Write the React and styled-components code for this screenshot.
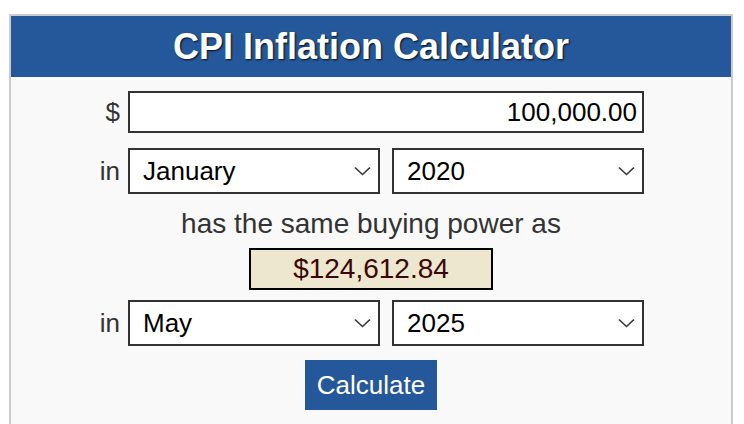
import React from "react";
import styled, { createGlobalStyle } from "styled-components";

const Global = createGlobalStyle`
  html, body { margin: 0; padding: 0; background: #ffffff; }
  body { font-family: "Liberation Sans", Arial, Helvetica, sans-serif; }
  * { box-sizing: border-box; }
`;

const Panel = styled.div`
  margin: 14px 0 0 9px;
  width: 724px;
  height: 430px;
  border: 2px solid #cccccc;
  border-bottom: none;
  background: #f9f9f9;
`;

const Header = styled.div`
  height: 61px;
  background: #25589a;
  display: flex;
  align-items: center;
  justify-content: center;
`;

const Title = styled.h1`
  margin: 0;
  color: #ffffff;
  font-size: 36px;
  font-weight: 700;
  text-shadow: 1px 1px 2px rgba(0, 0, 0, 0.85);
`;

const Form = styled.div`
  display: flex;
  flex-direction: column;
  align-items: center;
`;

const Row = styled.div`
  display: grid;
  grid-template-columns: 22px 516px;
  column-gap: 8px;
  align-items: center;
  margin-top: ${(p) => p.$top}px;
`;

const Label = styled.span`
  text-align: right;
  font-size: 26px;
  color: #333333;
`;

const AmountInput = styled.input`
  height: 42px;
  width: 516px;
  border: 2px solid #333333;
  background: #ffffff;
  font-family: inherit;
  font-size: 26px;
  color: #000000;
  text-align: right;
  padding: 0 5px;
  outline: none;
`;

const Selects = styled.div`
  display: grid;
  grid-template-columns: 252px 252px;
  column-gap: 12px;
`;

const SelectWrap = styled.div`
  position: relative;
  height: 46px;
`;

const Select = styled.select`
  appearance: none;
  -webkit-appearance: none;
  width: 100%;
  height: 100%;
  border: 2px solid #333333;
  border-radius: 0;
  background: #ffffff;
  font-family: inherit;
  font-size: 26px;
  color: #000000;
  padding: 0 36px 0 13px;
  outline: none;
`;

const Chevron = styled.svg`
  position: absolute;
  right: 9px;
  top: 18px;
  width: 17px;
  height: 10px;
  pointer-events: none;
`;

const Caption = styled.div`
  margin-top: 14px;
  font-size: 28px;
  line-height: 32px;
  color: #333333;
`;

const Result = styled.div`
  margin-top: 8px;
  width: 244px;
  height: 42px;
  border: 2px solid #000000;
  background: #ede7d0;
  color: #3a0808;
  font-size: 28px;
  display: flex;
  align-items: center;
  justify-content: center;
`;

const Button = styled.button`
  margin-top: 14px;
  height: 50px;
  width: 132px;
  border: none;
  background: #25589a;
  color: #ffffff;
  font-family: inherit;
  font-size: 26px;
  padding: 0;
`;

const months = [
  "January", "February", "March", "April", "May", "June",
  "July", "August", "September", "October", "November", "December",
];
const years = Array.from({ length: 113 }, (_, i) => String(1913 + i));

function Dropdown({ value, options }) {
  return (
    <SelectWrap>
      <Select defaultValue={value}>
        {options.map((o) => (
          <option key={o} value={o}>{o}</option>
        ))}
      </Select>
      <Chevron viewBox="0 0 17 10">
        <path d="M1 1.5 L8.5 8.5 L16 1.5" fill="none" stroke="#333" strokeWidth="1.6" />
      </Chevron>
    </SelectWrap>
  );
}

export default function App() {
  return (
    <>
      <Global />
      <Panel>
        <Header>
          <Title>CPI Inflation Calculator</Title>
        </Header>
        <Form>
          <Row $top={14}>
            <Label>$</Label>
            <AmountInput defaultValue="100,000.00" />
          </Row>
          <Row $top={15}>
            <Label>in</Label>
            <Selects>
              <Dropdown value="January" options={months} />
              <Dropdown value="2020" options={years} />
            </Selects>
          </Row>
          <Caption>has the same buying power as</Caption>
          <Result>$124,612.84</Result>
          <Row $top={10}>
            <Label>in</Label>
            <Selects>
              <Dropdown value="May" options={months} />
              <Dropdown value="2025" options={years} />
            </Selects>
          </Row>
          <Button>Calculate</Button>
        </Form>
      </Panel>
    </>
  );
}
